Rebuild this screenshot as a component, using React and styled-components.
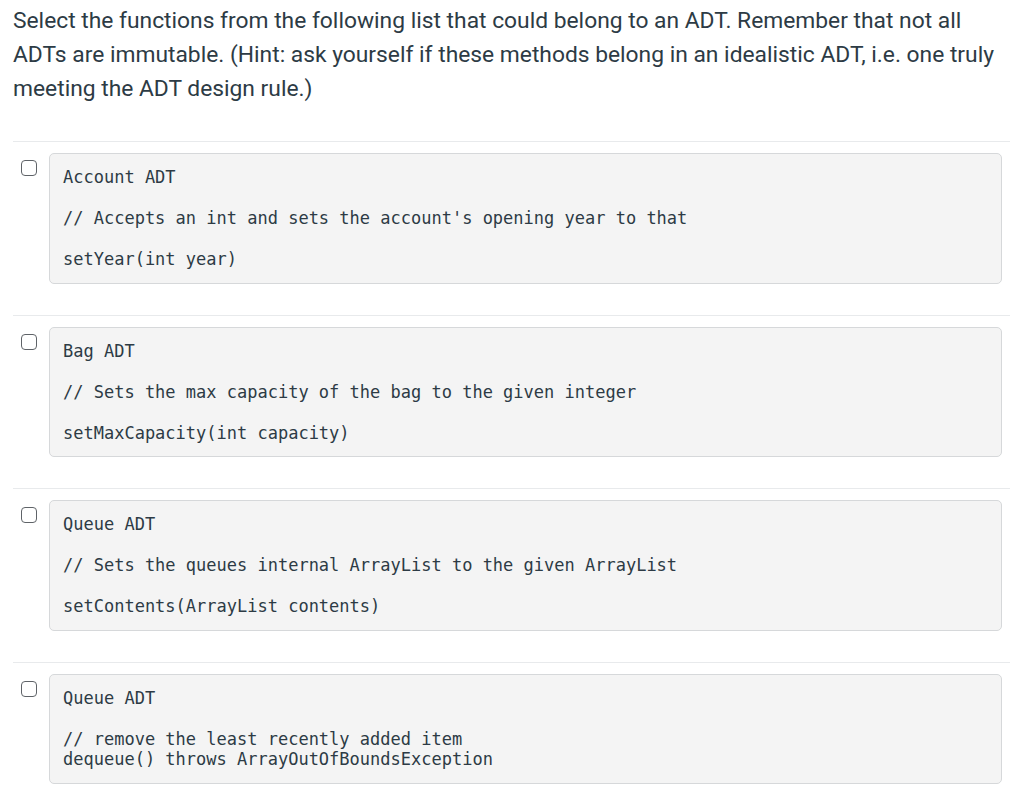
import React from 'react';
import styled, { createGlobalStyle } from 'styled-components';

const GlobalStyle = createGlobalStyle`
  body {
    margin: 0;
    background: #fff;
    font-family: Roboto, "Liberation Sans", sans-serif;
    color: #2d3b45;
  }
`;

const Page = styled.div`
  padding: 4px 14px 0 13px;
`;

const Question = styled.p`
  margin: 0 0 35px;
  font-size: 22.8px;
  line-height: 34px;
  color: #2d3b45;
`;

const Option = styled.label`
  display: flex;
  align-items: flex-start;
  gap: 12px;
  border-top: 1px solid #e8eaec;
  padding: 11px 8px 31px 8px;
  cursor: pointer;

  &:last-child {
    padding-bottom: 20px;
  }
`;

const Box = styled.span`
  flex: none;
  width: 16px;
  height: 16px;
  margin-top: 7px;
  box-sizing: border-box;
  border: 1.5px solid #5f6368;
  border-radius: 4px;
  background: #fff;
`;

const Code = styled.pre`
  flex: 1;
  margin: 0;
  padding: 13px 13px;
  background: #f4f4f4;
  border: 1px solid #d6d8da;
  border-radius: 5px;
  font-family: "DejaVu Sans Mono", "Liberation Mono", monospace;
  font-size: 17px;
  line-height: 20.5px;
  color: #2d3b45;
  white-space: pre-wrap;
`;

const options = [
  "Account ADT\n\n// Accepts an int and sets the account's opening year to that\n\nsetYear(int year)",
  'Bag ADT\n\n// Sets the max capacity of the bag to the given integer\n\nsetMaxCapacity(int capacity)',
  'Queue ADT\n\n// Sets the queues internal ArrayList to the given ArrayList\n\nsetContents(ArrayList contents)',
  'Queue ADT\n\n// remove the least recently added item\ndequeue() throws ArrayOutOfBoundsException',
];

const App = () => (
  <>
    <GlobalStyle />
    <Page>
      <Question>
        Select the functions from the following list that could belong to an ADT. Remember that not all
        ADTs are immutable. (Hint: ask yourself if these methods belong in an idealistic ADT, i.e. one truly
        meeting the ADT design rule.)
      </Question>
      {options.map((text, i) => (
        <Option key={i}>
          <Box />
          <Code>{text}</Code>
        </Option>
      ))}
    </Page>
  </>
);

export default App;
